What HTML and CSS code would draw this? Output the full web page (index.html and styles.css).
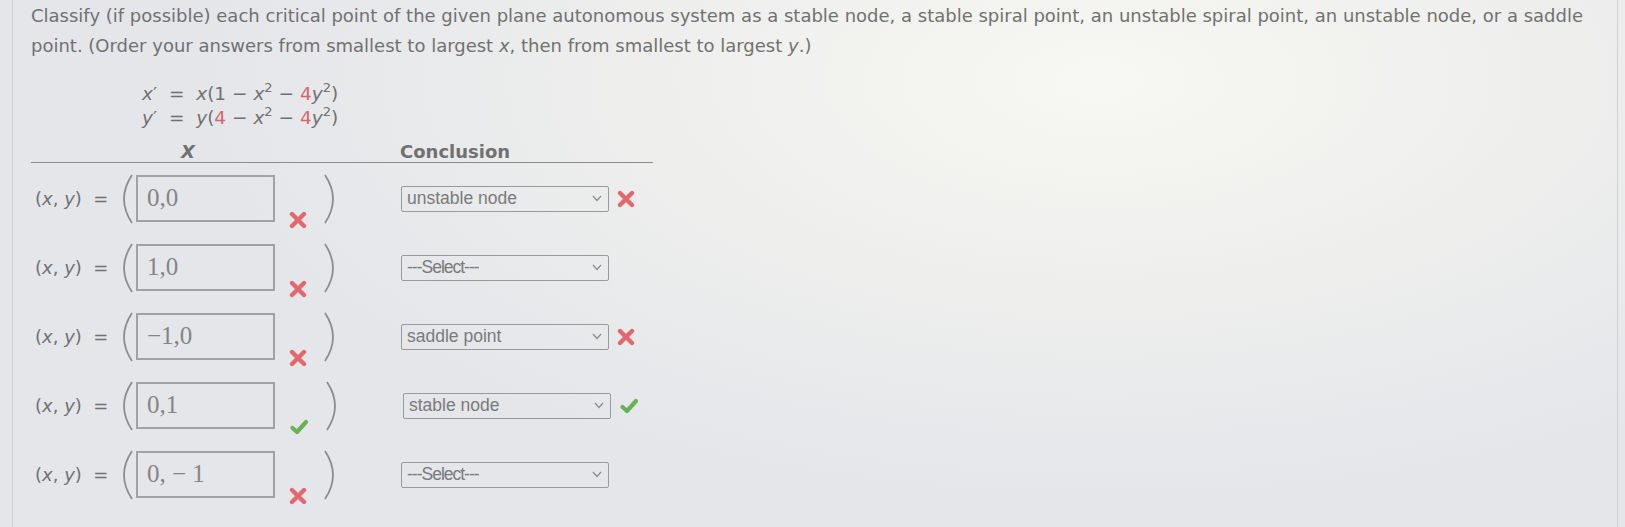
FILE: index.html
```html
<!DOCTYPE html>
<html>
<head>
<meta charset="utf-8">
<link rel="stylesheet" href="styles.css">
</head>
<body>
<div class="frame">
  <p class="question">Classify (if possible) each critical point of the given plane autonomous system as a stable node, a stable spiral point, an unstable spiral point, an unstable node, or a saddle point. (Order your answers from smallest to largest <i>x</i>, then from smallest to largest <i>y</i>.)</p>
  <div class="system">
    <div class="eq"><i>x</i>′ &nbsp;= &nbsp;<i>x</i>(1 − <i>x</i><sup>2</sup> − <span class="red">4</span><i>y</i><sup>2</sup>)</div>
    <div class="eq"><i>y</i>′ &nbsp;= &nbsp;<i>y</i>(<span class="red">4</span> − <i>x</i><sup>2</sup> − <span class="red">4</span><i>y</i><sup>2</sup>)</div>
  </div>
  <div class="table">
    <div class="thead">
      <div class="th-x"><i>X</i></div>
      <div class="th-c">Conclusion</div>
    </div>
    <div class="tbody">

    <div class="row">
      <div class="lbl">(<i>x</i>, <i>y</i>) &nbsp;=</div>
      <svg class="paren" width="13" height="50" viewBox="0 0 13 50"><path d="M12 1 Q-4 25 12 49" fill="none" stroke="#8d8d8d" stroke-width="1.8"/></svg>
      <div class="inp">0,0</div>
      <svg class="mark low" width="18" height="18" viewBox="0 0 18 18"><path d="M3 3 L15 15 M15 3 L3 15" stroke="#e4676b" stroke-width="4.4" stroke-linecap="round"/></svg>
      <svg class="paren close" width="13" height="50" viewBox="0 0 13 50"><path d="M1 1 Q17 25 1 49" fill="none" stroke="#8d8d8d" stroke-width="1.8"/></svg>
      <div class="sel"><span>unstable node</span><svg class="chev" width="10" height="7" viewBox="0 0 10 7"><path d="M1 1 L5 5.5 L9 1" fill="none" stroke="#8a8a8a" stroke-width="1.2"/></svg></div>
      <svg class="mark side" width="18" height="18" viewBox="0 0 18 18"><path d="M3 3 L15 15 M15 3 L3 15" stroke="#e4676b" stroke-width="4.4" stroke-linecap="round"/></svg>
    </div>

    <div class="row">
      <div class="lbl">(<i>x</i>, <i>y</i>) &nbsp;=</div>
      <svg class="paren" width="13" height="50" viewBox="0 0 13 50"><path d="M12 1 Q-4 25 12 49" fill="none" stroke="#8d8d8d" stroke-width="1.8"/></svg>
      <div class="inp">1,0</div>
      <svg class="mark low" width="18" height="18" viewBox="0 0 18 18"><path d="M3 3 L15 15 M15 3 L3 15" stroke="#e4676b" stroke-width="4.4" stroke-linecap="round"/></svg>
      <svg class="paren close" width="13" height="50" viewBox="0 0 13 50"><path d="M1 1 Q17 25 1 49" fill="none" stroke="#8d8d8d" stroke-width="1.8"/></svg>
      <div class="sel"><span class="ph">---Select---</span><svg class="chev" width="10" height="7" viewBox="0 0 10 7"><path d="M1 1 L5 5.5 L9 1" fill="none" stroke="#8a8a8a" stroke-width="1.2"/></svg></div>
    </div>

    <div class="row">
      <div class="lbl">(<i>x</i>, <i>y</i>) &nbsp;=</div>
      <svg class="paren" width="13" height="50" viewBox="0 0 13 50"><path d="M12 1 Q-4 25 12 49" fill="none" stroke="#8d8d8d" stroke-width="1.8"/></svg>
      <div class="inp">−1,0</div>
      <svg class="mark low" width="18" height="18" viewBox="0 0 18 18"><path d="M3 3 L15 15 M15 3 L3 15" stroke="#e4676b" stroke-width="4.4" stroke-linecap="round"/></svg>
      <svg class="paren close" width="13" height="50" viewBox="0 0 13 50"><path d="M1 1 Q17 25 1 49" fill="none" stroke="#8d8d8d" stroke-width="1.8"/></svg>
      <div class="sel"><span>saddle point</span><svg class="chev" width="10" height="7" viewBox="0 0 10 7"><path d="M1 1 L5 5.5 L9 1" fill="none" stroke="#8a8a8a" stroke-width="1.2"/></svg></div>
      <svg class="mark side" width="18" height="18" viewBox="0 0 18 18"><path d="M3 3 L15 15 M15 3 L3 15" stroke="#e4676b" stroke-width="4.4" stroke-linecap="round"/></svg>
    </div>

    <div class="row">
      <div class="lbl">(<i>x</i>, <i>y</i>) &nbsp;=</div>
      <svg class="paren" width="13" height="50" viewBox="0 0 13 50"><path d="M12 1 Q-4 25 12 49" fill="none" stroke="#8d8d8d" stroke-width="1.8"/></svg>
      <div class="inp">0,1</div>
      <svg class="mark low" width="20" height="18" viewBox="0 0 20 18"><path d="M3.5 10 L8 14 L17 4" fill="none" stroke="#6bb153" stroke-width="4.2" stroke-linecap="round" stroke-linejoin="round"/></svg>
      <svg class="paren close" width="13" height="50" viewBox="0 0 13 50"><path d="M1 1 Q17 25 1 49" fill="none" stroke="#8d8d8d" stroke-width="1.8"/></svg>
      <div class="sel"><span>stable node</span><svg class="chev" width="10" height="7" viewBox="0 0 10 7"><path d="M1 1 L5 5.5 L9 1" fill="none" stroke="#8a8a8a" stroke-width="1.2"/></svg></div>
      <svg class="mark side" width="20" height="18" viewBox="0 0 20 18"><path d="M3.5 10 L8 14 L17 4" fill="none" stroke="#6bb153" stroke-width="4.2" stroke-linecap="round" stroke-linejoin="round"/></svg>
    </div>

    <div class="row">
      <div class="lbl">(<i>x</i>, <i>y</i>) &nbsp;=</div>
      <svg class="paren" width="13" height="50" viewBox="0 0 13 50"><path d="M12 1 Q-4 25 12 49" fill="none" stroke="#8d8d8d" stroke-width="1.8"/></svg>
      <div class="inp">0, − 1</div>
      <svg class="mark low" width="18" height="18" viewBox="0 0 18 18"><path d="M3 3 L15 15 M15 3 L3 15" stroke="#e4676b" stroke-width="4.4" stroke-linecap="round"/></svg>
      <svg class="paren close" width="13" height="50" viewBox="0 0 13 50"><path d="M1 1 Q17 25 1 49" fill="none" stroke="#8d8d8d" stroke-width="1.8"/></svg>
      <div class="sel"><span class="ph">---Select---</span><svg class="chev" width="10" height="7" viewBox="0 0 10 7"><path d="M1 1 L5 5.5 L9 1" fill="none" stroke="#8a8a8a" stroke-width="1.2"/></svg></div>
    </div>

    </div>
  </div>
</div>
</body>
</html>
```

FILE: styles.css
```css
html, body {
  margin: 0;
  padding: 0;
}
body {
  width: 1625px;
  height: 527px;
  overflow: hidden;
  background: radial-gradient(ellipse 900px 420px at 1100px 80px, #f7f7f4 0%, #efefed 45%, #e4e6ea 100%);
  font-family: "DejaVu Sans", Verdana, sans-serif;
  color: #717171;
}
.frame {
  margin-left: 12px;
  width: 1586px;
  height: 527px;
  border-left: 1px solid #cfd0d3;
  border-right: 1px solid #cfd0d3;
  padding: 1px 0 0 18px;
}
.question {
  margin: 0;
  width: 1580px;
  font-size: 18px;
  line-height: 30px;
}
.question i {
  font-style: italic;
}
.system {
  margin-top: 21px;
  padding-left: 111px;
  font-size: 18.5px;
  line-height: 24px;
}
.eq i {
  font-style: italic;
}
.eq sup {
  font-size: 13px;
  line-height: 0;
  vertical-align: 8px;
}
.red {
  color: #d6686a;
}
.table {
  width: 622px;
}
.thead {
  display: flex;
  height: 20px;
  line-height: 20px;
  padding-top: 7px;
  margin-top: 5px;
  border-bottom: 1.5px solid #8c8c8c;
  font-weight: bold;
  font-size: 18px;
}
.th-x {
  width: 217px;
  padding-left: 150px;
  box-sizing: border-box;
}
.th-c {
  margin-left: 152px;
}
.tbody {
  padding-top: 1px;
}
.row {
  display: flex;
  align-items: center;
  height: 69px;
}
.lbl {
  width: 86px;
  padding-left: 4px;
  box-sizing: border-box;
  font-size: 18px;
  white-space: nowrap;
}
.lbl i {
  font-style: italic;
}
.paren {
  margin-left: 3px;
  flex: none;
}
.paren.close {
  margin-left: 17px;
}
.inp {
  margin-left: 3px;
  width: 139px;
  height: 47px;
  box-sizing: border-box;
  border: 2px solid #a2a2a2;
  padding-left: 9px;
  font-family: "Liberation Serif", "Times New Roman", serif;
  font-size: 25px;
  line-height: 41px;
  color: #858585;
  flex: none;
}
.mark {
  flex: none;
}
.mark.low {
  margin-left: 14px;
  margin-top: 43px;
}
.mark.side {
  margin-left: 8px;
}
.sel {
  margin-left: 64px;
  width: 208px;
  height: 26px;
  box-sizing: border-box;
  border: 1.5px solid #9a9a9a;
  border-radius: 2px;
  display: flex;
  align-items: center;
  padding: 0 6px 0 5px;
  font-family: "Liberation Sans", Arial, sans-serif;
  font-size: 17.5px;
  color: #7a7a7a;
  flex: none;
}
.sel .ph {
  letter-spacing: -1px;
}
.chev {
  margin-left: auto;
}
```
